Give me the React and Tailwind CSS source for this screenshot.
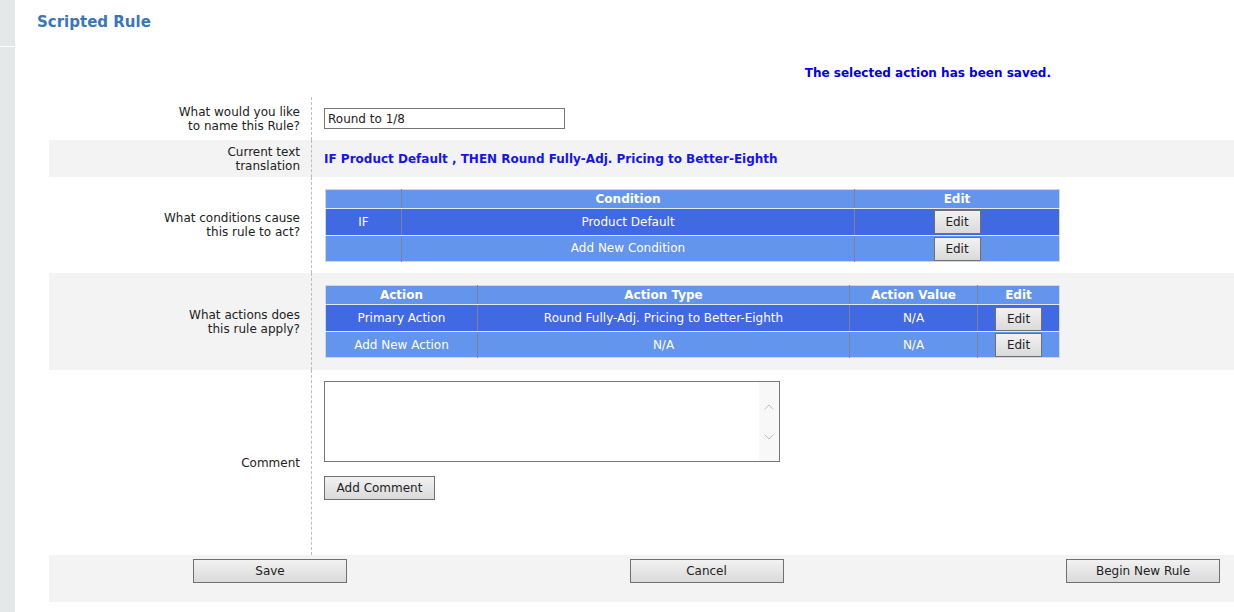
import React from 'react';
import { ChevronUp, ChevronDown } from 'lucide-react';

const font = { fontFamily: '"DejaVu Sans", Verdana, sans-serif' };

function Btn({ children, className = '' }) {
    return (
        <button
            className={`h-[24px] border border-[#707070] bg-gradient-to-b from-[#f2f2f2] to-[#dadada] text-[12px] text-[#222] leading-none ${className}`}
        >
            {children}
        </button>
    );
}

function Row({ label, gray, className = '', children }) {
    return (
        <div className={`grid grid-cols-[263px_1fr] ${gray ? 'bg-[#f3f3f3]' : ''} ${className}`}>
            <div className="flex items-center justify-end pr-[11px] text-right text-[12px] leading-[14px] text-[#222] border-r border-dashed border-[#bdbdbd]">
                <div>{label}</div>
            </div>
            <div className="pl-[12px] flex flex-col justify-center">{children}</div>
        </div>
    );
}

export default function App() {
    return (
        <div className="flex w-[1234px] h-[612px] bg-white overflow-hidden" style={font}>
            <div className="w-[15px] shrink-0 flex flex-col bg-[#e5e8e8]">
                <div className="h-[47px] border-b border-white"></div>
            </div>

            <div className="flex-1 flex flex-col">
                <h1 className="pl-[22px] pt-[11px] h-[44px] text-[15px] font-bold text-[#3b76ba]">Scripted Rule</h1>

                <div className="h-[53px] flex items-start justify-end pr-[183px] pt-[20px]">
                    <span className="text-[12px] font-bold text-[#0000ee]">The selected action has been saved.</span>
                </div>

                <div className="ml-[34px]">
                    <Row label={<>What would you like<br />to name this Rule?</>} className="h-[43px]">
                        <input
                            defaultValue="Round to 1/8"
                            className="w-[241px] h-[21px] border border-[#777] px-[3px] text-[12px] text-[#222] outline-none"
                            style={font}
                        />
                    </Row>

                    <Row gray label={<>Current text<br />translation</>} className="h-[37px]">
                        <div className="text-[12px] font-bold text-[#1414f0]">
                            IF Product Default , THEN Round Fully-Adj. Pricing to Better-Eighth
                        </div>
                    </Row>

                    <Row label={<>What conditions cause<br />this rule to act?</>} className="h-[96px]">
                        <table className="ml-[1px] w-[735px] border-collapse border border-[#cfd6e4] text-[12px] text-white text-center">
                            <thead>
                                <tr className="bg-[#6495ed] h-[18px]">
                                    <th className="w-[76px] border-r border-[#7f7f9f] border-b border-b-[#e2e8f5]"></th>
                                    <th className="w-[453px] border-r border-[#7f7f9f] border-b border-b-[#e2e8f5]">Condition</th>
                                    <th className="border-b border-[#e2e8f5]">Edit</th>
                                </tr>
                            </thead>
                            <tbody>
                                <tr className="bg-[#4169e1] h-[27px]">
                                    <td className="border-r border-[#7f7f9f] border-b border-b-[#e2e8f5]">IF</td>
                                    <td className="border-r border-[#7f7f9f] border-b border-b-[#e2e8f5]">Product Default</td>
                                    <td className="border-b border-[#e2e8f5]"><Btn className="w-[47px] h-[23px] mt-[1px]">Edit</Btn></td>
                                </tr>
                                <tr className="bg-[#6495ed] h-[26px]">
                                    <td className="border-r border-[#7f7f9f]"></td>
                                    <td className="border-r border-[#7f7f9f]">Add New Condition</td>
                                    <td><Btn className="w-[47px] h-[23px] mt-[1px]">Edit</Btn></td>
                                </tr>
                            </tbody>
                        </table>
                    </Row>

                    <Row gray label={<>What actions does<br />this rule apply?</>} className="h-[97px]">
                        <table className="ml-[1px] w-[735px] border-collapse border border-[#cfd6e4] text-[12px] text-white text-center">
                            <thead>
                                <tr className="bg-[#6495ed] h-[18px]">
                                    <th className="w-[152px] border-r border-[#7f7f9f] border-b border-b-[#e2e8f5]">Action</th>
                                    <th className="w-[372px] border-r border-[#7f7f9f] border-b border-b-[#e2e8f5]">Action Type</th>
                                    <th className="w-[128px] border-r border-[#7f7f9f] border-b border-b-[#e2e8f5]">Action Value</th>
                                    <th className="border-b border-[#e2e8f5]">Edit</th>
                                </tr>
                            </thead>
                            <tbody>
                                <tr className="bg-[#4169e1] h-[27px]">
                                    <td className="border-r border-[#7f7f9f] border-b border-b-[#e2e8f5]">Primary Action</td>
                                    <td className="border-r border-[#7f7f9f] border-b border-b-[#e2e8f5]">Round Fully-Adj. Pricing to Better-Eighth</td>
                                    <td className="border-r border-[#7f7f9f] border-b border-b-[#e2e8f5]">N/A</td>
                                    <td className="border-b border-[#e2e8f5]"><Btn className="w-[47px] h-[23px] mt-[1px]">Edit</Btn></td>
                                </tr>
                                <tr className="bg-[#6495ed] h-[26px]">
                                    <td className="border-r border-[#7f7f9f]">Add New Action</td>
                                    <td className="border-r border-[#7f7f9f]">N/A</td>
                                    <td className="border-r border-[#7f7f9f]">N/A</td>
                                    <td><Btn className="w-[47px] h-[23px] mt-[1px]">Edit</Btn></td>
                                </tr>
                            </tbody>
                        </table>
                    </Row>

                    <Row label="Comment" className="h-[185px]">
                        <div className="h-full flex flex-col items-start pt-[11px]">
                            <div className="w-[456px] h-[81px] border border-[#777] flex justify-end">
                                <div className="w-[20px] h-full bg-[#f8f8f8] flex flex-col items-center justify-center gap-[14px] text-[#bdbdbd]">
                                    <ChevronUp size={16} strokeWidth={1.5} />
                                    <ChevronDown size={16} strokeWidth={1.5} />
                                </div>
                            </div>
                            <Btn className="mt-[14px] w-[111px] text-[12px]">Add Comment</Btn>
                        </div>
                    </Row>

                    <div className="h-[47px] bg-[#f3f3f3] flex items-start justify-between pl-[144px] pr-[14px] pt-[4px]">
                        <Btn className="w-[154px]">Save</Btn>
                        <Btn className="w-[154px]">Cancel</Btn>
                        <Btn className="w-[154px]">Begin New Rule</Btn>
                    </div>
                </div>
            </div>
        </div>
    );
}
